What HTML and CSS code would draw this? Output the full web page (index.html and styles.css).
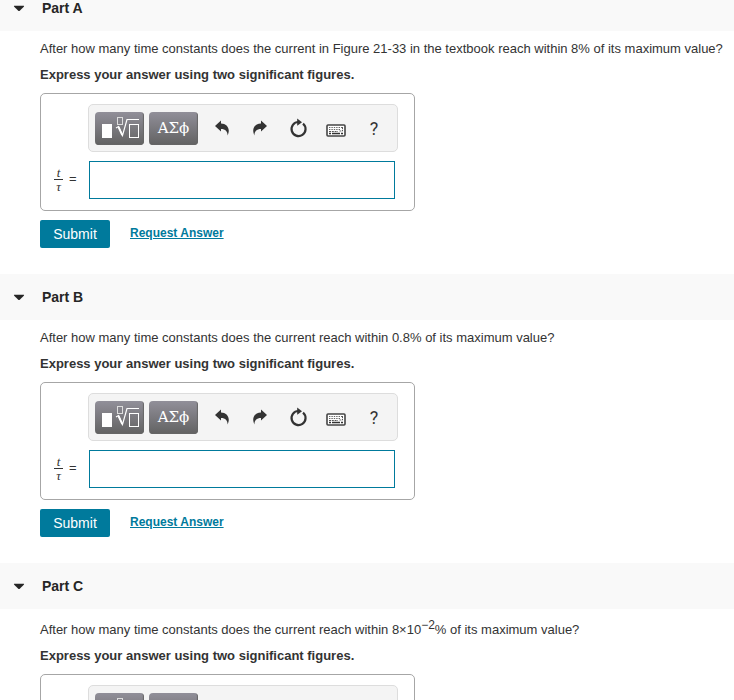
FILE: index.html
```html
<!DOCTYPE html>
<html lang="en">
<head>
    <meta charset="UTF-8">
    <title>Time constants</title>
    <link rel="stylesheet" href="styles.css">
</head>
<body>

    <!-- Shared icons -->
    <svg class="sprite" aria-hidden="true">
        <symbol id="caret" viewBox="0 0 12 7">
            <path d="M1.200 0.800h9.600q0.600 0.200 0 0.900L7 5.600Q6 6.600 5 5.600L1.200 1.700Q0.600 1 1.200 0.800z" fill="#262626"/>
        </symbol>
        <symbol id="root" viewBox="0 0 49 33">
            <rect x="7" y="12" width="10" height="14" fill="#fff"/>
            <rect x="22.5" y="5.5" width="5" height="7" fill="none" stroke="#ddd"/>
            <path d="M21 16l2.500-1.500 4 9L32 7.500h12" fill="none" stroke="#fff" stroke-width="1.200"/>
            <path d="M23.500 15l3.700 8" fill="none" stroke="#fff" stroke-width="1.800"/>
            <rect x="34.500" y="12.500" width="9" height="13" fill="none" stroke="#fff"/>
        </symbol>
        <symbol id="undo" viewBox="0 0 14 16">
            <path d="M0 6L6 0.500V3.500C10.500 3.500 13.800 6.500 13.800 11Q13.600 13.500 12.600 15.500C12.600 11.500 10.500 9 6 9V11.500z" fill="#333"/>
        </symbol>
        <symbol id="redo" viewBox="0 0 14 16">
            <path d="M14 6L8 0.500V3.500C3.500 3.500 0.200 6.500 0.200 11Q0.400 13.500 1.400 15.500C1.400 11.500 3.500 9 8 9V11.500z" fill="#333"/>
        </symbol>
        <symbol id="reset" viewBox="0 0 18 20">
            <path d="M14 5.600A7 7 0 1 1 9.500 4" fill="none" stroke="#333" stroke-width="2.200"/>
            <path d="M8.200 0.500L13 4.200L8.200 7.800z" fill="#333"/>
        </symbol>
        <symbol id="keyboard" viewBox="0 0 20 13">
            <rect x="1" y="1" width="18" height="11" rx="1" fill="#fff" stroke="#444" stroke-width="1.600"/>
            <path d="M3 3.500h14M3 5.500h12" stroke="#666" stroke-dasharray="1.400 1"/>
            <path d="M16.500 3v4h-3M3 7.500h9" fill="none" stroke="#555" stroke-dasharray="2 0.800"/>
            <path d="M3 9.500h2M6 9.500h8M15 9.500h2" stroke="#333" stroke-width="1.300"/>
        </symbol>
    </svg>

    <main>
        <section class="part">
            <h2><svg class="caret"><use href="#caret"/></svg>Part A</h2>
            <form class="part-body">
                <p>After how many time constants does the current in Figure 21-33 in the textbook reach within 8% of its maximum value?</p>
                <p class="instructions">Express your answer using two significant figures.</p>
                <div class="answer-box">
                    <div class="toolbar">
                        <button type="button" class="palette" aria-label="Templates"><svg class="root"><use href="#root"/></svg></button>
                        <button type="button" class="palette">ΑΣϕ</button>
                        <button type="button" class="tool" aria-label="Undo"><svg class="arrow"><use href="#undo"/></svg></button>
                        <button type="button" class="tool" aria-label="Redo"><svg class="arrow"><use href="#redo"/></svg></button>
                        <button type="button" class="tool" aria-label="Reset"><svg class="reset"><use href="#reset"/></svg></button>
                        <button type="button" class="tool" aria-label="Keyboard shortcuts"><svg class="keyboard"><use href="#keyboard"/></svg></button>
                        <button type="button" class="tool">?</button>
                    </div>
                    <label for="answerA"><span class="fraction"><i>t</i><i>τ</i></span> =</label>
                    <input id="answerA" type="text">
                </div>
                <div class="actions">
                    <button class="submit">Submit</button>
                    <a href="#">Request Answer</a>
                </div>
            </form>
        </section>

        <section class="part">
            <h2><svg class="caret"><use href="#caret"/></svg>Part B</h2>
            <form class="part-body">
                <p>After how many time constants does the current reach within 0.8% of its maximum value?</p>
                <p class="instructions">Express your answer using two significant figures.</p>
                <div class="answer-box">
                    <div class="toolbar">
                        <button type="button" class="palette" aria-label="Templates"><svg class="root"><use href="#root"/></svg></button>
                        <button type="button" class="palette">ΑΣϕ</button>
                        <button type="button" class="tool" aria-label="Undo"><svg class="arrow"><use href="#undo"/></svg></button>
                        <button type="button" class="tool" aria-label="Redo"><svg class="arrow"><use href="#redo"/></svg></button>
                        <button type="button" class="tool" aria-label="Reset"><svg class="reset"><use href="#reset"/></svg></button>
                        <button type="button" class="tool" aria-label="Keyboard shortcuts"><svg class="keyboard"><use href="#keyboard"/></svg></button>
                        <button type="button" class="tool">?</button>
                    </div>
                    <label for="answerB"><span class="fraction"><i>t</i><i>τ</i></span> =</label>
                    <input id="answerB" type="text">
                </div>
                <div class="actions">
                    <button class="submit">Submit</button>
                    <a href="#">Request Answer</a>
                </div>
            </form>
        </section>

        <section class="part">
            <h2><svg class="caret"><use href="#caret"/></svg>Part C</h2>
            <form class="part-body">
                <p>After how many time constants does the current reach within 8×10<sup>−2</sup>% of its maximum value?</p>
                <p class="instructions">Express your answer using two significant figures.</p>
                <div class="answer-box">
                    <div class="toolbar">
                        <button type="button" class="palette" aria-label="Templates"><svg class="root"><use href="#root"/></svg></button>
                        <button type="button" class="palette" aria-label="Greek letters"></button>
                    </div>
                </div>
            </form>
        </section>
    </main>

</body>
</html>
```
FILE: styles.css
```css
* {
    box-sizing: border-box;
}

body {
    margin: 0;
    height: 100vh;
    overflow: hidden;
    background: #fff;
    color: #333;
    font-family: "Liberation Sans", Arial, sans-serif;
    font-size: 13px;
    line-height: 16px;
}

main {
    margin-top: -15px;
}

.sprite {
    display: none;
}

h2 {
    display: flex;
    align-items: center;
    gap: 17px;
    height: 46px;
    margin: 0;
    padding-left: 13px;
    background: #f9f9f9;
    color: #262626;
    font-size: 14px;
}

.caret {
    width: 12px;
    height: 7px;
}

.part-body {
    padding: 10px 0 26px 40px;
}

p {
    margin: 0 0 10px;
}

sup {
    font-size: 12px;
    line-height: 12px;
}

.instructions {
    font-weight: bold;
}

.answer-box {
    display: grid;
    grid-template-columns: 48px 1fr;
    row-gap: 9px;
    max-width: 375px;
    padding: 10px 16px 11px 0;
    border: 1px solid #a6a6a6;
    border-radius: 5px;
}

.toolbar {
    grid-column: 2;
    display: flex;
    align-items: center;
    height: 48px;
    margin-left: -1px;
    padding-left: 6px;
    background: #f4f4f4;
    border: 1px solid #ddd;
    border-radius: 5px;
}

.palette {
    width: 49px;
    height: 33px;
    margin-right: 5px;
    padding: 0;
    border: 0;
    border-radius: 4px;
    background: linear-gradient(#918f99, #626262);
    box-shadow: inset -1px -1px 1px #666;
    color: #fff;
    font-family: "DejaVu Serif", serif;
    font-size: 15px;
}

.tool {
    display: flex;
    align-items: center;
    justify-content: center;
    width: 38px;
    height: 33px;
    padding: 0;
    border: 0;
    background: none;
    color: #333;
    font-family: Roboto, sans-serif;
    font-size: 18px;
}

.root {
    display: block;
    width: 49px;
    height: 33px;
}

.arrow {
    width: 14px;
    height: 16px;
}

.reset {
    width: 18px;
    height: 20px;
}

.keyboard {
    width: 20px;
    height: 13px;
    margin-top: 4px;
}

label {
    display: flex;
    align-items: center;
    gap: 6px;
    padding: 0 0 2px 13px;
}

.fraction {
    display: flex;
    flex-direction: column;
    width: 9px;
    font-family: "Liberation Serif", serif;
    font-size: 13px;
    line-height: 13px;
    text-align: center;
}

.fraction i:first-child {
    border-bottom: 1px solid #333;
}

input {
    width: calc(100% - 3px);
    height: 38px;
    padding: 0 8px;
    border: 1px solid #007a9c;
    background: #fff;
    font-size: 16px;
}

.actions {
    display: flex;
    gap: 20px;
    margin-top: 9px;
}

.submit {
    width: 70px;
    height: 28px;
    padding: 0;
    border: 0;
    border-radius: 2px;
    background: #007a9c;
    color: #fff;
    font-family: inherit;
    font-size: 14px;
}

.actions a {
    color: #007a9c;
    font-size: 12px;
    font-weight: bold;
    line-height: 26px;
}
```
